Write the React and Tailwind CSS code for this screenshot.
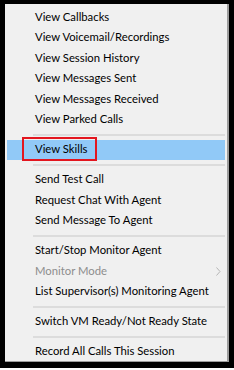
import React from "react";

const groups = [
  ["View Callbacks", "View Voicemail/Recordings", "View Session History", "View Messages Sent", "View Messages Received", "View Parked Calls"],
  ["View Skills"],
  ["Send Test Call", "Request Chat With Agent", "Send Message To Agent"],
  ["Start/Stop Monitor Agent", "Monitor Mode", "List Supervisor(s) Monitoring Agent"],
  ["Switch VM Ready/Not Ready State"],
  ["Record All Calls This Session"],
];

const Item = ({ label }) => {
  const active = label === "View Skills";
  const disabled = label === "Monitor Mode";
  return (
    <div
      className={`relative mx-[2px] h-[20.5px] flex items-center pl-[28px] whitespace-nowrap ${
        active ? "bg-[#91c9f7]" : ""
      } ${disabled ? "text-[#8d8d8d]" : "text-black"}`}
    >
      <span>{label}</span>
      {active && (
        <div className="absolute left-[15px] top-[-3px] w-[75px] h-[24px] border-2 border-[#e3161f]" />
      )}
      {disabled && (
        <svg className="absolute right-[4px] top-[6px]" width="5" height="9" viewBox="0 0 5 9">
          <path d="M0.5 0.5 L4 4.5 L0.5 8.5" fill="none" stroke="#b5b5b5" strokeWidth="1" />
        </svg>
      )}
    </div>
  );
};

const App = () => {
  return (
    <div className="w-[234px] h-[370px] bg-white">
      <div className="h-[368px] bg-black pt-[4px] pl-[5px] pr-[5px] pb-[6px]">
        <div
          className="h-full bg-[#f0f0f0] border-r-2 border-b border-[#9c9c9c] pt-[3px] text-[11.3px]"
          style={{ fontFamily: 'Lato, "Noto Sans", sans-serif' }}
        >
          {groups.map((g, i) => (
            <div key={i}>
              {i > 0 && (
                <div className="h-[9.5px] flex items-center pl-[28px] pr-[2px]">
                  <div className="h-[2px] w-full bg-[#dcdcdc]" />
                </div>
              )}
              {g.map((label) => (
                <Item key={label} label={label} />
              ))}
            </div>
          ))}
        </div>
      </div>
    </div>
  );
};

export default App;
